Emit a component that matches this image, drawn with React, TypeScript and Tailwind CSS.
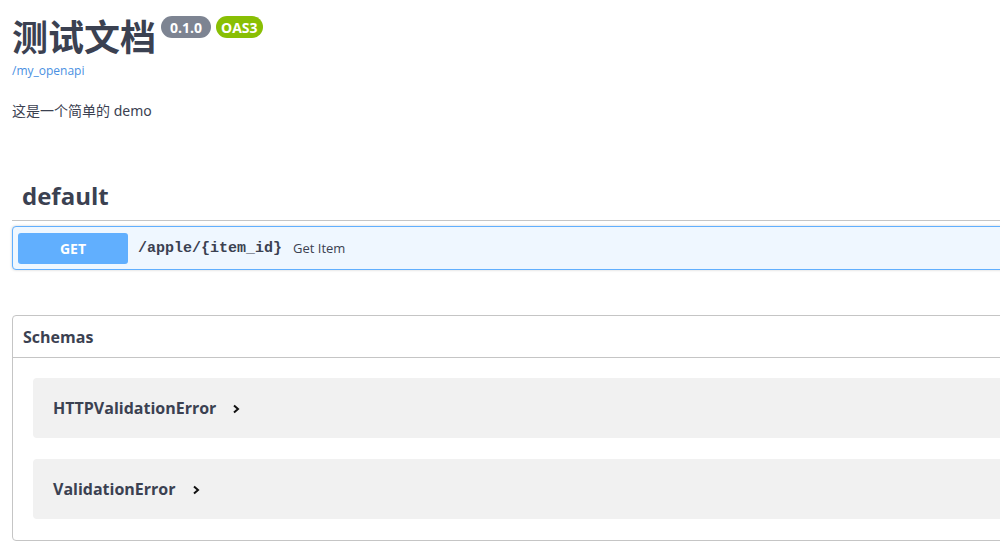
import React from "react"

const sans = { fontFamily: '"Open Sans", "Noto Sans", "Noto Sans CJK SC", sans-serif' }
const cjk = { fontFamily: '"Noto Sans", "Noto Sans CJK SC", sans-serif' }

function Chevron() {
  return (
    <svg width="10" height="10" viewBox="0 0 10 10" className="ml-[15px] mt-[2px]">
      <path d="M3 1.5 L7 5 L3 8.5" fill="none" stroke="#111" strokeWidth="2" />
    </svg>
  )
}

function SchemaRow({ name }: { name: string }) {
  return (
    <div className="flex h-[60px] items-center rounded bg-[#f1f1f1] px-5">
      <span className="text-[16px] font-bold text-[#3b4151]" style={sans}>
        {name}
      </span>
      <Chevron />
    </div>
  )
}

export default function App() {
  return (
    <div className="h-[546px] w-[1000px] overflow-hidden bg-white">
      <div className="w-[1400px] pl-3" style={cjk}>
        {/* info */}
        <div className="flex items-start pt-[14px]">
          <h2 className="text-[36px] font-bold leading-[48px] text-[#3b4151]">测试文档</h2>
          <div className="ml-[5px] mt-[2px] flex gap-[5px]">
            <span className="flex h-[22px] items-center rounded-full bg-[#7d8492] px-[9px] text-[14px] font-bold text-white" style={sans}>
              0.1.0
            </span>
            <span className="flex h-[22px] items-center rounded-full bg-[#89bf04] px-[5px] text-[14px] font-bold text-white" style={sans}>
              OAS3
            </span>
          </div>
        </div>
        <a className="mt-[1px] block text-[12px] leading-[16px] text-[#4990e2]" style={sans}>
          /my_openapi
        </a>
        <p className="mt-[22px] text-[14px] leading-[20px] text-[#3b4151]">这是一个简单的 demo</p>

        {/* default tag */}
        <div className="mt-[50px]">
          <h3 className="flex h-[50px] items-center border-b border-[#c5c5c5] pl-[10px] text-[24px] font-bold text-[#3b4151]" style={sans}>
            default
          </h3>
          <div className="mt-[5px] flex h-[44px] items-center rounded border border-[#61affe] bg-[#eff7ff] px-[5px] shadow-[0_0_3px_rgba(0,0,0,0.19)]">
            <span className="flex h-[31px] w-[110px] items-center justify-center rounded-[3px] bg-[#61affe] text-[14px] font-bold text-white" style={sans}>
              GET
            </span>
            <span className="ml-[10px] mt-[2px] text-[15px] font-bold text-[#3b4151]" style={{ fontFamily: '"Liberation Mono", "DejaVu Sans Mono", monospace' }}>
              /apple/{"{item_id}"}
            </span>
            <span className="ml-[11px] mt-[2px] text-[13px] text-[#3b4151]" style={sans}>
              Get Item
            </span>
          </div>
        </div>

        {/* schemas */}
        <div className="mt-[45px] rounded border border-[#c5c5c5]">
          <div className="flex h-[42px] items-center border-b border-[#c5c5c5] px-[10px]">
            <span className="text-[16px] font-bold text-[#3b4151]" style={sans}>
              Schemas
            </span>
          </div>
          <div className="flex flex-col gap-[21px] px-5 pb-[21px] pt-5">
            <SchemaRow name="HTTPValidationError" />
            <SchemaRow name="ValidationError" />
          </div>
        </div>
      </div>
    </div>
  )
}
